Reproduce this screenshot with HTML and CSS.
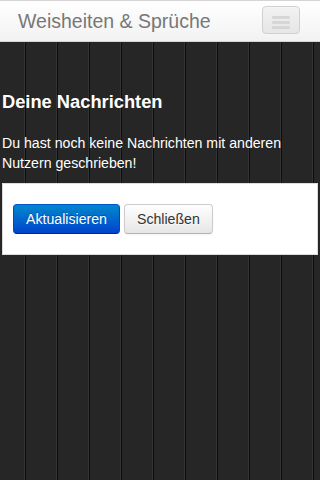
FILE: index.html
```
<!DOCTYPE html>
<html lang="de">
<head>
<meta charset="utf-8">
<title>Weisheiten &amp; Sprüche</title>
<link rel="stylesheet" href="styles.css">
</head>
<body>
<header class="navbar">
  <span class="brand">Weisheiten &amp; Sprüche</span>
  <button class="btn-navbar" type="button" aria-label="Menü">
    <span class="icon-bar"></span>
    <span class="icon-bar"></span>
    <span class="icon-bar"></span>
  </button>
</header>
<main class="content">
  <h2 class="title">Deine Nachrichten</h2>
  <p class="message">Du hast noch keine Nachrichten mit anderen Nutzern geschrieben!</p>
  <div class="panel">
    <button class="btn btn-primary" type="button">Aktualisieren</button>
    <button class="btn btn-default" type="button">Schließen</button>
  </div>
</main>
</body>
</html>
```
FILE: styles.css
```
html, body {
  margin: 0;
  padding: 0;
}
body {
  min-height: 480px;
  font-family: "Liberation Sans", Arial, sans-serif;
  font-size: 14.15px;
  line-height: 20px;
  color: #fff;
  background-color: #262626;
  background-image: repeating-linear-gradient(to right,
    #262626 0, #262626 24px,
    #333333 24px, #333333 25px,
    #0e0e0e 25px, #0e0e0e 26px,
    #262626 26px, #262626 32px);
}
.navbar {
  display: flex;
  justify-content: space-between;
  align-items: flex-start;
  height: 40px;
  padding: 0 20px 0 18px;
  border-top: 1px solid #d4d4d4;
  border-bottom: 1px solid #d4d4d4;
  background: linear-gradient(#ffffff, #f2f2f2);
}
.brand {
  margin-top: 10px;
  font-size: 19.5px;
  line-height: 20px;
  color: #777777;
}
.btn-navbar {
  display: flex;
  flex-direction: column;
  gap: 3px;
  margin-top: 5px;
  width: 38px;
  height: 28px;
  padding: 9px 9px 0;
  border: 1px solid #d0d0d0;
  border-radius: 4px;
  background: linear-gradient(#f2f2f2, #e6e6e6);
  box-shadow: inset 0 1px 0 rgba(255,255,255,0.3);
}
.icon-bar {
  display: block;
  width: 18px;
  height: 2px;
  border-radius: 1px;
  background: #d6d6d6;
  box-shadow: 0 1px 0 rgba(0,0,0,0.08);
}
.content {
  padding: 50px 2px 0;
}
.title {
  margin: 0 0 21px;
  font-size: 18.3px;
  line-height: 20px;
  font-weight: bold;
  color: #fff;
}
.message {
  margin: 0 0 10px;
}
.panel {
  background: #fff;
  border: 1px solid #dcdcdc;
  padding: 20px 10px;
  display: flex;
  gap: 4px;
}
.btn {
  font-family: "Liberation Sans", Arial, sans-serif;
  font-size: 14.15px;
  line-height: 20px;
  padding: 4px 12px;
  border-radius: 4px;
  cursor: pointer;
}
.btn-primary {
  color: #fff;
  text-shadow: 0 -1px 0 rgba(0,0,0,0.25);
  border: 1px solid #0044cc;
  border-color: #0055cc #0044cc #002a80;
  background: linear-gradient(#0088cc, #0044cc);
}
.btn-default {
  color: #333;
  text-shadow: 0 1px 1px rgba(255,255,255,0.75);
  border: 1px solid #cccccc;
  border-bottom-color: #b3b3b3;
  background: linear-gradient(#ffffff, #e6e6e6);
  box-shadow: 0 1px 2px rgba(0,0,0,0.05);
}
```
